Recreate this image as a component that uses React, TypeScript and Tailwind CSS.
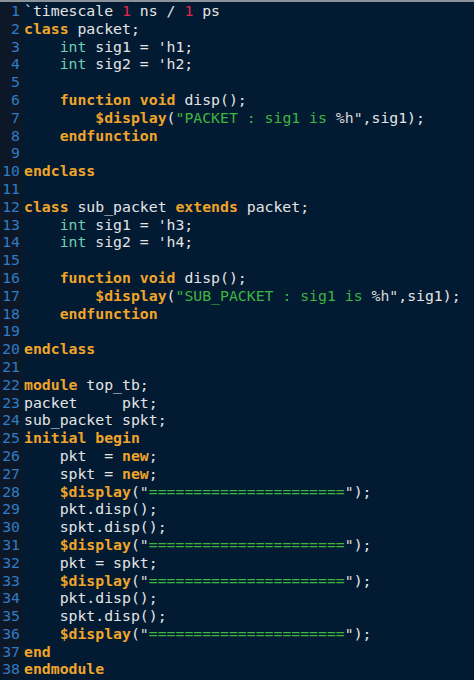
type Tok = [string, string?]

const kw = "text-[#f0a52a] font-bold"
const ty = "text-[#6fcfb0]"
const st = "text-[#3fb53f]"
const num = "text-[#e8244f]"
const qt = "text-[#d8d8d8]"

const sep = "======================"

const lines: Tok[][] = [
    [["`timescale "], ["1", num], [" ns / "], ["1", num], [" ps"]],
    [["class", kw], [" packet;"]],
    [["    "], ["int", ty], [" sig1 = 'h1;"]],
    [["    "], ["int", ty], [" sig2 = 'h2;"]],
    [],
    [["    "], ["function", kw], [" "], ["void", kw], [" disp();"]],
    [["        "], ["$display", kw], ["("], ["\"PACKET : sig1 is ", st], ["%h\"", qt], [",sig1);"]],
    [["    "], ["endfunction", kw]],
    [],
    [["endclass", kw]],
    [],
    [["class", kw], [" sub_packet "], ["extends", kw], [" packet;"]],
    [["    "], ["int", ty], [" sig1 = 'h3;"]],
    [["    "], ["int", ty], [" sig2 = 'h4;"]],
    [],
    [["    "], ["function", kw], [" "], ["void", kw], [" disp();"]],
    [["        "], ["$display", kw], ["("], ["\"SUB_PACKET : sig1 is ", st], ["%h\"", qt], [",sig1);"]],
    [["    "], ["endfunction", kw]],
    [],
    [["endclass", kw]],
    [],
    [["module", kw], [" top_tb;"]],
    [["packet     pkt;"]],
    [["sub_packet spkt;"]],
    [["initial", kw], [" "], ["begin", kw]],
    [["    pkt  = "], ["new", kw], [";"]],
    [["    spkt = "], ["new", kw], [";"]],
    [["    "], ["$display", kw], ["("], ["\"", qt], [sep, st], ["\"", qt], [");"]],
    [["    pkt.disp();"]],
    [["    spkt.disp();"]],
    [["    "], ["$display", kw], ["("], ["\"", qt], [sep, st], ["\"", qt], [");"]],
    [["    pkt = spkt;"]],
    [["    "], ["$display", kw], ["("], ["\"", qt], [sep, st], ["\"", qt], [");"]],
    [["    pkt.disp();"]],
    [["    spkt.disp();"]],
    [["    "], ["$display", kw], ["("], ["\"", qt], [sep, st], ["\"", qt], [");"]],
    [["end", kw]],
    [["endmodule", kw]],
]

export default function App() {
    return (
        <div className="w-[474px] h-[680px] overflow-hidden bg-[#021b33] border-t-2 border-[#8b9199] font-['DejaVu_Sans_Mono',monospace] text-[14.8px] leading-[17.8px] text-[#e4e4e4]">
            {lines.map((toks, i) => (
                <div key={i} className="flex flex-row">
                    <span className="w-[22px] shrink-0 bg-[#0c1828] pr-[2px] text-right text-[#2f7cc6]">
                        {i + 1}
                    </span>
                    <span className="pl-[2px] whitespace-pre">
                        {toks.map(([t, c], j) => (
                            <span key={j} className={c}>{t}</span>
                        ))}
                    </span>
                </div>
            ))}
        </div>
    )
}
